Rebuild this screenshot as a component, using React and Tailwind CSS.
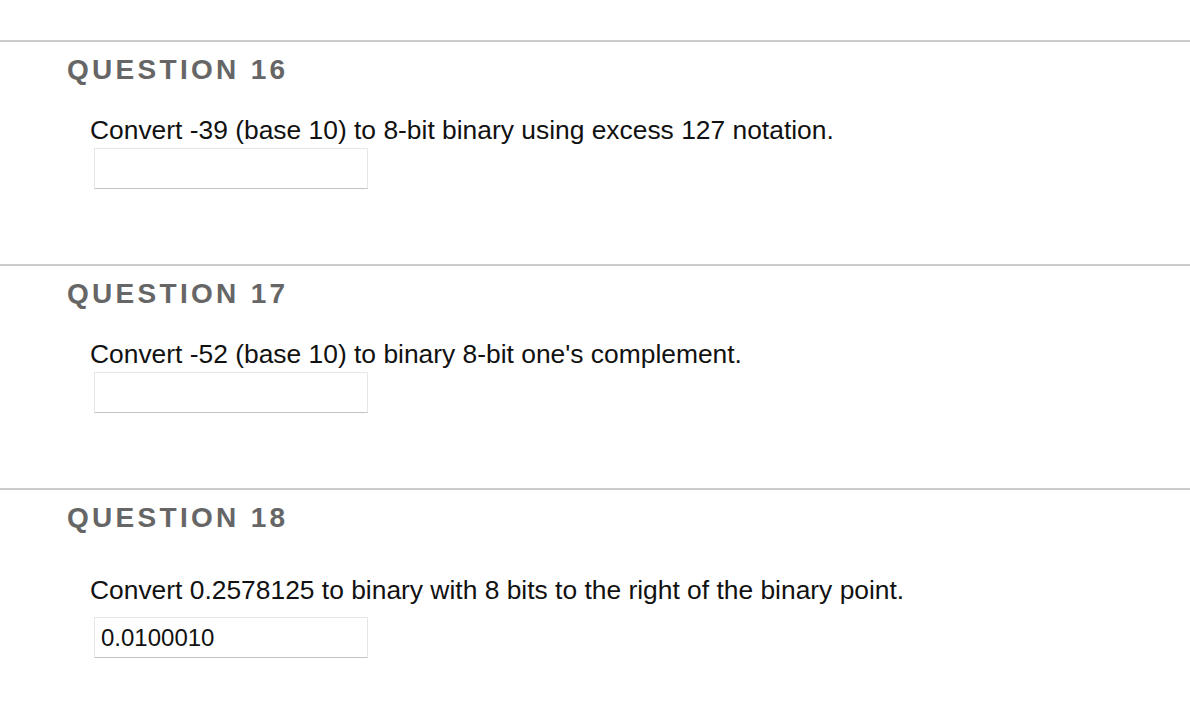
import React from 'react';

const questions = [
  { num: 16, text: 'Convert -39 (base 10) to 8-bit binary using excess 127 notation.', answer: '', bodyTop: 'mt-[29px]', inputTop: 'mt-[3px]', bottom: 'pb-[75px]' },
  { num: 17, text: "Convert -52 (base 10) to binary 8-bit one's complement.", answer: '', bodyTop: 'mt-[29px]', inputTop: 'mt-[3px]', bottom: 'pb-[75px]' },
  { num: 18, text: 'Convert 0.2578125 to binary with 8 bits to the right of the binary point.', answer: '0.0100010', bodyTop: 'mt-[41px]', inputTop: 'mt-[12px]', bottom: 'pb-[48px]' },
];

export default function App() {
  return (
    <div className="w-[1190px] min-h-[708px] bg-white pt-[40px] font-['Liberation_Sans',Arial,sans-serif]">
      {questions.map((q) => (
        <div key={q.num} className={`border-t-2 border-[#cccccc] ${q.bottom}`}>
          <h2 className="mt-[12px] pl-[67px] text-[28px] leading-[32px] font-bold tracking-[3.3px] text-[#666666]">
            QUESTION {q.num}
          </h2>
          <p className={`${q.bodyTop} pl-[90px] text-[26.4px] leading-[30px] text-[#111111]`}>{q.text}</p>
          <div className={`${q.inputTop} ml-[94px] w-[274px] h-[41px] border border-[#e6e6e6] border-b-[#c4c4c4] bg-white flex items-center pl-[6px] text-[24px] text-[#111111]`}>
            {q.answer}
          </div>
        </div>
      ))}
    </div>
  );
}
